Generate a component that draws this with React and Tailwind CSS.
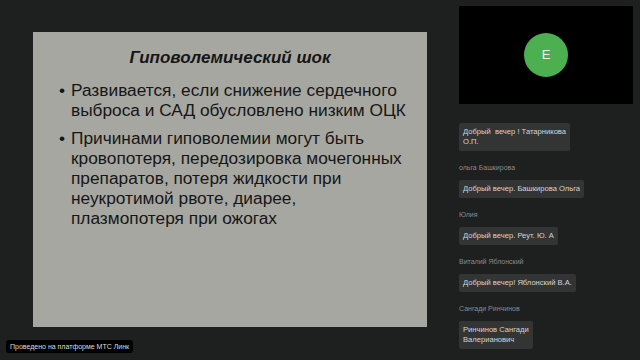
export default function App() {
  const msgs = [
    { name: null, lines: ["Добрый  вечер ! Татарникова", "О.П."] },
    { name: "ольга Башкирова", lines: ["Добрый вечер. Башкирова Ольга"] },
    { name: "Юлия", lines: ["Добрый вечер. Реут. Ю. А"] },
    { name: "Виталий Яблонский", lines: ["Добрый вечер! Яблонский В.А."] },
    { name: "Сангади Ринчинов", lines: ["Ринчинов Сангади", "Валерианович"] },
  ];
  return (
    <div className="relative w-[640px] h-[360px] overflow-hidden bg-[#1e1f1f] flex" style={{ fontFamily: '"Liberation Sans", Arial, sans-serif' }}>
      <div className="w-[459px] pl-[33px] pt-[32px]">
        <div className="w-[394px] h-[295px] bg-[#a6a7a1] pt-[14px] text-[#161616] overflow-hidden">
          <div className="text-center font-bold italic text-[17px] leading-[24px]">Гиповолемический шок</div>
          <ul className="mt-[10px] ml-[26px] w-[360px] text-[17.3px] leading-[20px] flex flex-col gap-[8px]">
            <li className="flex">
              <span className="w-[12px] shrink-0">•</span>
              <span>Развивается, если снижение сердечного выброса и САД обусловлено низким ОЦК</span>
            </li>
            <li className="flex">
              <span className="w-[12px] shrink-0">•</span>
              <span>
                Причинами гиповолемии могут быть кровопотеря, передозировка мочегонных препаратов, потеря жидкости при неукротимой рвоте, диарее,
                <br />
                плазмопотеря при ожогах
              </span>
            </li>
          </ul>
        </div>
      </div>
      <div className="w-[174px] pt-[6px] flex flex-col">
        <div className="h-[98px] bg-black flex items-center justify-center">
          <div className="w-[44px] h-[44px] rounded-full bg-[#4caf50] flex items-center justify-center text-[#e8f5e9] text-[13px]">E</div>
        </div>
        <div className="mt-[19px] flex flex-col">
          {msgs.map((m, i) => (
            <div key={i} className="flex flex-col items-start">
              {m.name && (
                <div className="mt-[12px] mb-[7px] text-[7px] leading-[10px] text-[#8c8c8c]">{m.name}</div>
              )}
              <div className="bg-[#333434] rounded-[2px] px-[4px] py-[4px] text-[7.6px] leading-[10px] text-[#d6d6d6] whitespace-pre">
                {m.lines.map((l, j) => (
                  <div key={j}>{l}</div>
                ))}
              </div>
            </div>
          ))}
        </div>
      </div>
      <div className="absolute left-[6px] top-[340px] h-[13px] px-[4px] bg-black rounded-[3px] text-[7px] leading-[13px] text-[#dcdcdc]">Проведено на платформе МТС Линк</div>
    </div>
  );
}
